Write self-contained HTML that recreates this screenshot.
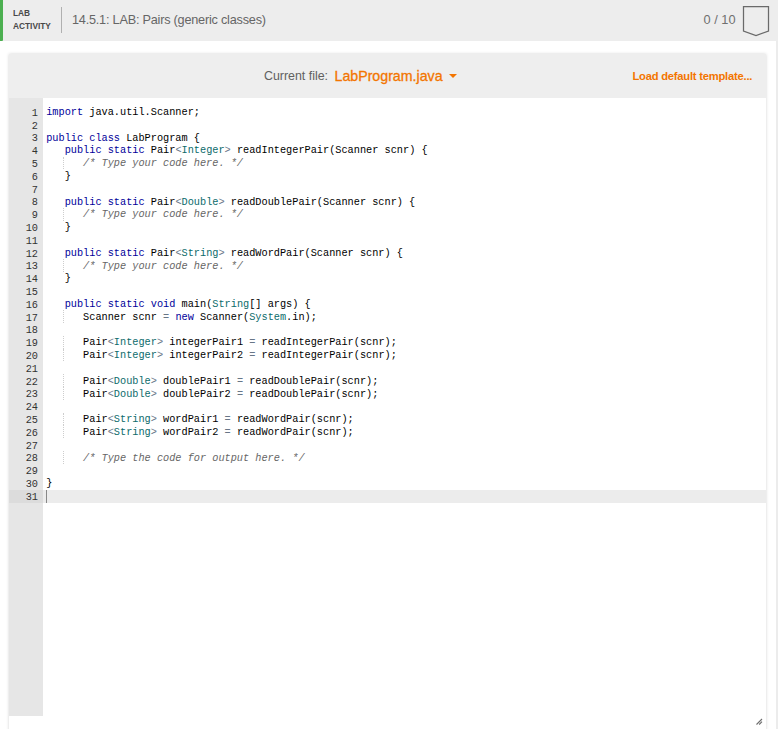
<!DOCTYPE html>
<html><head><meta charset="utf-8">
<style>
html,body{margin:0;padding:0;}
body{width:778px;height:729px;overflow:hidden;background:#ececec;position:relative;font-family:"Liberation Sans",sans-serif;}
#page{position:absolute;left:0;top:41px;width:776px;height:688px;background:#fff;}
#hdr{position:absolute;left:0;top:0;width:778px;height:41px;background:#ededed;}
#green{position:absolute;left:0;top:0;width:3px;height:41px;background:#4caf50;border-radius:0 0 1px 0;}
#lab{position:absolute;left:13px;top:6.2px;font-size:10.4px;font-weight:bold;color:#484848;line-height:13.5px;transform:scale(0.80,0.96);transform-origin:0 0;}
#sep{position:absolute;left:61px;top:7px;width:1px;height:26px;background:#b0b0b0;}
#title{position:absolute;left:72px;top:13px;font-size:12.7px;letter-spacing:-0.22px;color:#666;white-space:nowrap;}
#score{position:absolute;left:703.5px;top:12px;font-size:12.8px;color:#707070;white-space:nowrap;}
#badge{position:absolute;left:740px;top:3px;}
#panel{position:absolute;left:9px;top:54px;width:757px;height:700px;background:#fff;box-shadow:0 0 3px rgba(0,0,0,.18);}
#tb{position:absolute;left:9px;top:54px;width:757px;height:44px;background:#eeeeee;}
#cf{position:absolute;left:264px;top:68.5px;font-size:12.4px;color:#606060;white-space:nowrap;}
#fn{position:absolute;left:334.5px;top:67.5px;font-size:14.2px;color:#f37500;-webkit-text-stroke:0.3px #f37500;white-space:nowrap;}
#caret{position:absolute;left:449px;top:74px;width:0;height:0;border-left:4.3px solid transparent;border-right:4.3px solid transparent;border-top:4.4px solid #f37500;}
#ldt{position:absolute;left:632.5px;top:69.5px;font-size:11.2px;letter-spacing:-0.22px;font-weight:bold;color:#f37500;white-space:nowrap;}
#editor{position:absolute;left:9px;top:98px;width:757px;height:618px;background:#fff;overflow:hidden;}
#gutter{position:absolute;left:0;top:0;width:34px;height:618px;background:#e6e6e6;}
#code{position:absolute;left:0;top:8px;width:757px;}
.ln{position:relative;height:12.8px;line-height:12.8px;white-space:pre;font-family:"Liberation Mono",monospace;font-size:10.26px;color:#000;}
.gn{position:absolute;left:0;top:0.8px;width:29px;text-align:right;color:#333;}
.tx{position:absolute;left:37.2px;}
.act{background:#ececec;}
.act .gbg{position:absolute;left:0;top:0;width:34px;height:12.8px;background:#dcdcdc;}
.k{color:#00009a;}
.t{color:#0b6b6b;}
.o{color:#687687;}
.c{color:#666;font-style:italic;}
.g{position:absolute;left:53.5px;top:-0.5px;width:0;height:12.8px;border-left:1px dotted #cdcdcd;}
#cursor{position:absolute;left:37px;top:0;width:1px;height:12.8px;background:#888;}
#resize{position:absolute;left:754px;top:716px;}
</style></head>
<body>
<div id="page"></div>
<div id="hdr">
  <div id="green"></div>
  <div id="lab">LAB<br>ACTIVITY</div>
  <div id="sep"></div>
  <div id="title">14.5.1: LAB: Pairs (generic classes)</div>
  <div id="score">0 / 10</div>
  <svg id="badge" width="32" height="36" viewBox="740 3 32 36"><path d="M743.5 6.5H768.5V31L756 35.5L743.5 31Z" fill="none" stroke="#6a6a6a" stroke-width="1.25"/></svg>
</div>
<div id="panel"></div>
<div id="tb"></div>
<div id="cf">Current file:</div>
<div id="fn">LabProgram.java</div>
<div id="caret"></div>
<div id="ldt">Load default template...</div>
<div id="editor">
  <div id="gutter"></div>
  <div id="code">
<div class="ln"><span class="gn">1</span><span class="tx"><span class="k">import</span> java.util.Scanner;</span></div>
<div class="ln"><span class="gn">2</span><span class="tx"></span></div>
<div class="ln"><span class="gn">3</span><span class="tx"><span class="k">public</span> <span class="k">class</span> LabProgram {</span></div>
<div class="ln"><span class="gn">4</span><span class="tx">   <span class="k">public</span> <span class="k">static</span> Pair<span class="o">&lt;</span><span class="t">Integer</span><span class="o">&gt;</span> readIntegerPair(Scanner scnr) {</span></div>
<div class="ln"><span class="gn">5</span><div class="g"></div><span class="tx">      <span class="c">/* Type your code here. */</span></span></div>
<div class="ln"><span class="gn">6</span><span class="tx">   }</span></div>
<div class="ln"><span class="gn">7</span><span class="tx"></span></div>
<div class="ln"><span class="gn">8</span><span class="tx">   <span class="k">public</span> <span class="k">static</span> Pair<span class="o">&lt;</span><span class="t">Double</span><span class="o">&gt;</span> readDoublePair(Scanner scnr) {</span></div>
<div class="ln"><span class="gn">9</span><div class="g"></div><span class="tx">      <span class="c">/* Type your code here. */</span></span></div>
<div class="ln"><span class="gn">10</span><span class="tx">   }</span></div>
<div class="ln"><span class="gn">11</span><span class="tx"></span></div>
<div class="ln"><span class="gn">12</span><span class="tx">   <span class="k">public</span> <span class="k">static</span> Pair<span class="o">&lt;</span><span class="t">String</span><span class="o">&gt;</span> readWordPair(Scanner scnr) {</span></div>
<div class="ln"><span class="gn">13</span><div class="g"></div><span class="tx">      <span class="c">/* Type your code here. */</span></span></div>
<div class="ln"><span class="gn">14</span><span class="tx">   }</span></div>
<div class="ln"><span class="gn">15</span><span class="tx"></span></div>
<div class="ln"><span class="gn">16</span><span class="tx">   <span class="k">public</span> <span class="k">static</span> <span class="k">void</span> main(<span class="t">String</span>[] args) {</span></div>
<div class="ln"><span class="gn">17</span><div class="g"></div><span class="tx">      Scanner scnr <span class="o">=</span> <span class="k">new</span> Scanner(<span class="t">System</span>.in);</span></div>
<div class="ln"><span class="gn">18</span><span class="tx"></span></div>
<div class="ln"><span class="gn">19</span><div class="g"></div><span class="tx">      Pair<span class="o">&lt;</span><span class="t">Integer</span><span class="o">&gt;</span> integerPair1 <span class="o">=</span> readIntegerPair(scnr);</span></div>
<div class="ln"><span class="gn">20</span><div class="g"></div><span class="tx">      Pair<span class="o">&lt;</span><span class="t">Integer</span><span class="o">&gt;</span> integerPair2 <span class="o">=</span> readIntegerPair(scnr);</span></div>
<div class="ln"><span class="gn">21</span><span class="tx"></span></div>
<div class="ln"><span class="gn">22</span><div class="g"></div><span class="tx">      Pair<span class="o">&lt;</span><span class="t">Double</span><span class="o">&gt;</span> doublePair1 <span class="o">=</span> readDoublePair(scnr);</span></div>
<div class="ln"><span class="gn">23</span><div class="g"></div><span class="tx">      Pair<span class="o">&lt;</span><span class="t">Double</span><span class="o">&gt;</span> doublePair2 <span class="o">=</span> readDoublePair(scnr);</span></div>
<div class="ln"><span class="gn">24</span><span class="tx"></span></div>
<div class="ln"><span class="gn">25</span><div class="g"></div><span class="tx">      Pair<span class="o">&lt;</span><span class="t">String</span><span class="o">&gt;</span> wordPair1 <span class="o">=</span> readWordPair(scnr);</span></div>
<div class="ln"><span class="gn">26</span><div class="g"></div><span class="tx">      Pair<span class="o">&lt;</span><span class="t">String</span><span class="o">&gt;</span> wordPair2 <span class="o">=</span> readWordPair(scnr);</span></div>
<div class="ln"><span class="gn">27</span><span class="tx"></span></div>
<div class="ln"><span class="gn">28</span><div class="g"></div><span class="tx">      <span class="c">/* Type the code for output here. */</span></span></div>
<div class="ln"><span class="gn">29</span><span class="tx"></span></div>
<div class="ln"><span class="gn">30</span><span class="tx">}</span></div>
<div class="ln act"><div class="gbg"></div><span class="gn">31</span><span class="tx"></span><div id="cursor"></div></div>
  </div>
</div>
<svg id="resize" width="10" height="10" viewBox="754 716 10 10"><path d="M756.5 724.5L762 719M759.2 724.5L762 721.7" stroke="#6e6e6e" stroke-width="1.1" fill="none"/></svg>
</body></html>
